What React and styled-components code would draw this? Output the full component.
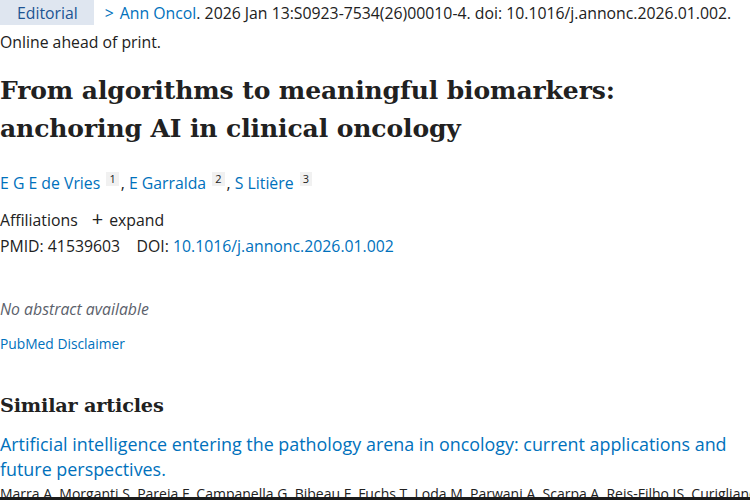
import React from "react";
import styled, { createGlobalStyle } from "styled-components";

const Global = createGlobalStyle`
  html, body { margin: 0; padding: 0; background: #fff; }
  body { font-family: "Open Sans", "Noto Sans", sans-serif; color: #212121; }
`;

const Page = styled.div`
  width: 750px;
  height: 500px;
  overflow: hidden;
  position: relative;
  box-sizing: border-box;
  border-bottom: 3px solid #1b1b1b;
`;

const Header = styled.div`
  display: flex;
  align-items: center;
  gap: 11px;
  height: 25px;
  font-size: 15.8px;
`;

const Badge = styled.span`
  display: inline-flex;
  align-items: center;
  height: 25px;
  padding: 0 16px 0 17px;
  background: #dfe6f0;
  color: #205493;
  font-size: 15.8px;
`;

const Cite = styled.span`
  color: #212121;
  white-space: nowrap;
`;

const Link = styled.a`
  color: #0071bc;
  text-decoration: none;
`;

const Chevron = styled.span`
  color: #0071bc;
  margin-right: 6px;
`;

const Line = styled.div`
  font-size: ${p => p.$size || 15.8}px;
  line-height: ${p => p.$lh || 22}px;
  margin-top: ${p => p.$mt || 0}px;
  color: ${p => p.$color || "#212121"};
  font-style: ${p => (p.$italic ? "italic" : "normal")};
  white-space: nowrap;
`;

const Title = styled.h1`
  margin: 19px 0 0;
  font-family: "DejaVu Serif", serif;
  font-weight: 700;
  font-size: 25px;
  line-height: 38px;
  letter-spacing: -0.1px;
  color: #212121;
`;

const Sup = styled.sup`
  display: inline-block;
  background: #f1f1f1;
  color: #212121;
  font-size: 11px;
  line-height: 14px;
  padding: 0 3px;
  margin: 0 2px;
  vertical-align: 6px;
`;

const Plus = styled.span`
  margin: 0 6px 0 14px;
  font-size: 20px;
`;

const SectionTitle = styled.h2`
  margin: 36px 0 0;
  font-family: "DejaVu Serif", serif;
  font-weight: 700;
  font-size: 19.3px;
  line-height: 30px;
  letter-spacing: -0.2px;
  color: #212121;
`;

const ArticleTitle = styled.a`
  display: block;
  margin-top: 11px;
  color: #0071bc;
  text-decoration: none;
  font-size: 17.9px;
  line-height: 25px;
`;

export default function App() {
  return (
    <>
      <Global />
      <Page>
        <Header>
          <Badge>Editorial</Badge>
          <Cite>
            <Chevron>&gt;</Chevron>
            <Link>Ann Oncol</Link>. 2026 Jan 13:S0923-7534(26)00010-4. doi: 10.1016/j.annonc.2026.01.002.
          </Cite>
        </Header>
        <Line $mt={6}>Online ahead of print.</Line>
        <Title>
          From algorithms to meaningful biomarkers:
          <br />
          anchoring AI in clinical oncology
        </Title>
        <Line $mt={24}>
          <Link>E G E de Vries</Link> <Sup>1</Sup>, <Link>E Garralda</Link> <Sup>2</Sup>, <Link>S Litière</Link> <Sup>3</Sup>
        </Line>
        <Line $mt={14}>
          Affiliations<Plus>+</Plus>expand
        </Line>
        <Line $mt={4}>
          PMID: 41539603&nbsp;&nbsp;&nbsp; DOI: <Link>10.1016/j.annonc.2026.01.002</Link>
        </Line>
        <Line $mt={41} $italic $color="#5b616b">No abstract available</Line>
        <Line $mt={13} $size={13.8} $color="#0071bc">PubMed Disclaimer</Line>
        <SectionTitle>Similar articles</SectionTitle>
        <ArticleTitle>
          Artificial intelligence entering the pathology arena in oncology: current applications and future perspectives.
        </ArticleTitle>
        <Line $mt={1} $size={14} $lh={22}>
          Marra A, Morganti S, Pareja F, Campanella G, Bibeau F, Fuchs T, Loda M, Parwani A, Scarpa A, Reis-Filho JS, Curigliano G
        </Line>
      </Page>
    </>
  );
}
